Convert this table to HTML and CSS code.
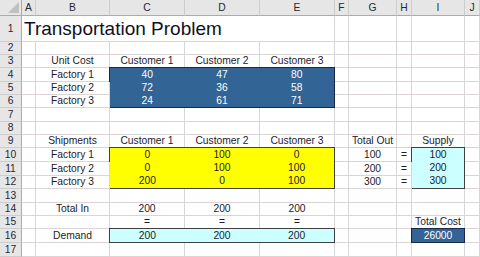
FILE: index.html
```html
<!DOCTYPE html>
<html>
<head>
<meta charset="utf-8">
<title>Transportation Problem</title>
<link rel="stylesheet" href="styles.css">
</head>
<body>
<div class="sheet">
  <!-- column headers -->
  <div class="corner"><div class="tri"></div></div>
  <div class="col">A</div><div class="col">B</div><div class="col">C</div><div class="col">D</div><div class="col">E</div>
  <div class="col">F</div><div class="col">G</div><div class="col">H</div><div class="col">I</div><div class="col">J</div>

  <!-- row 1 -->
  <div class="row">1</div>
  <div class="c title">Transportation Problem</div>
  <div class="c"></div><div class="c"></div><div class="c"></div><div class="c"></div><div class="c"></div><div class="c"></div>

  <!-- row 2 -->
  <div class="row">2</div>
  <div class="c"></div><div class="c"></div><div class="c"></div><div class="c"></div><div class="c"></div>
  <div class="c"></div><div class="c"></div><div class="c"></div><div class="c"></div><div class="c"></div>

  <!-- row 3 -->
  <div class="row">3</div>
  <div class="c"></div><div class="c">Unit Cost</div><div class="c">Customer 1</div><div class="c">Customer 2</div><div class="c">Customer 3</div>
  <div class="c"></div><div class="c"></div><div class="c"></div><div class="c"></div><div class="c"></div>

  <!-- row 4 -->
  <div class="row">4</div>
  <div class="c"></div><div class="c">Factory 1</div>
  <div class="blk blue cost">
    <div class="v">40</div><div class="v">47</div><div class="v">80</div>
    <div class="v">72</div><div class="v">36</div><div class="v">58</div>
    <div class="v">24</div><div class="v">61</div><div class="v">71</div>
  </div>
  <div class="c"></div><div class="c"></div><div class="c"></div><div class="c"></div><div class="c"></div>

  <!-- row 5 -->
  <div class="row">5</div>
  <div class="c"></div><div class="c">Factory 2</div>
  <div class="c"></div><div class="c"></div><div class="c"></div><div class="c"></div><div class="c"></div>

  <!-- row 6 -->
  <div class="row">6</div>
  <div class="c"></div><div class="c">Factory 3</div>
  <div class="c"></div><div class="c"></div><div class="c"></div><div class="c"></div><div class="c"></div>

  <!-- row 7 -->
  <div class="row">7</div>
  <div class="c"></div><div class="c"></div><div class="c"></div><div class="c"></div><div class="c"></div>
  <div class="c"></div><div class="c"></div><div class="c"></div><div class="c"></div><div class="c"></div>

  <!-- row 8 -->
  <div class="row">8</div>
  <div class="c"></div><div class="c"></div><div class="c"></div><div class="c"></div><div class="c"></div>
  <div class="c"></div><div class="c"></div><div class="c"></div><div class="c"></div><div class="c"></div>

  <!-- row 9 -->
  <div class="row">9</div>
  <div class="c"></div><div class="c">Shipments</div><div class="c">Customer 1</div><div class="c">Customer 2</div><div class="c">Customer 3</div>
  <div class="c"></div><div class="c">Total Out</div><div class="c"></div><div class="c">Supply</div><div class="c"></div>

  <!-- row 10 -->
  <div class="row">10</div>
  <div class="c"></div><div class="c">Factory 1</div>
  <div class="blk yellow ship">
    <div class="v">0</div><div class="v">100</div><div class="v">0</div>
    <div class="v">0</div><div class="v">100</div><div class="v">100</div>
    <div class="v">200</div><div class="v">0</div><div class="v">100</div>
  </div>
  <div class="c"></div><div class="c">100</div><div class="c">=</div>
  <div class="blk cyan supply">
    <div class="v">100</div>
    <div class="v">200</div>
    <div class="v">300</div>
  </div>
  <div class="c"></div>

  <!-- row 11 -->
  <div class="row">11</div>
  <div class="c"></div><div class="c">Factory 2</div>
  <div class="c"></div><div class="c">200</div><div class="c">=</div><div class="c"></div>

  <!-- row 12 -->
  <div class="row">12</div>
  <div class="c"></div><div class="c">Factory 3</div>
  <div class="c"></div><div class="c">300</div><div class="c">=</div><div class="c"></div>

  <!-- row 13 -->
  <div class="row">13</div>
  <div class="c"></div><div class="c"></div><div class="c"></div><div class="c"></div><div class="c"></div>
  <div class="c"></div><div class="c"></div><div class="c"></div><div class="c"></div><div class="c"></div>

  <!-- row 14 -->
  <div class="row">14</div>
  <div class="c"></div><div class="c">Total In</div><div class="c">200</div><div class="c">200</div><div class="c">200</div>
  <div class="c"></div><div class="c"></div><div class="c"></div><div class="c"></div><div class="c"></div>

  <!-- row 15 -->
  <div class="row">15</div>
  <div class="c"></div><div class="c"></div><div class="c">=</div><div class="c">=</div><div class="c">=</div>
  <div class="c"></div><div class="c"></div><div class="c"></div><div class="c">Total Cost</div><div class="c"></div>

  <!-- row 16 -->
  <div class="row">16</div>
  <div class="c"></div><div class="c">Demand</div>
  <div class="blk cyan demand">
    <div class="v">200</div><div class="v">200</div><div class="v">200</div>
  </div>
  <div class="c"></div><div class="c"></div><div class="c"></div>
  <div class="blk blue total">
    <div class="v">26000</div>
  </div>
  <div class="c"></div>

  <!-- row 17 -->
  <div class="row">17</div>
  <div class="c"></div><div class="c"></div><div class="c"></div><div class="c"></div><div class="c"></div>
  <div class="c"></div><div class="c"></div><div class="c"></div><div class="c"></div><div class="c"></div>
</div>
</body>
</html>
```

FILE: styles.css
```css
* {
  box-sizing: border-box;
}

html,
body {
  margin: 0;
  padding: 0;
}

body {
  width: 480px;
  height: 257px;
  overflow: hidden;
  background: #ffffff;
  font-family: "Liberation Sans", Arial, sans-serif;
  font-size: 10.3px;
  color: #1c1c2c;
}

.sheet {
  display: grid;
  grid-template-columns: 22px 14px 74px 75px 75px 75px 14px 48px 15px 53px 15px;
  grid-template-rows: 16px 26px 13px 13px 14px 13px 13px 14px 13px 13px 14px 14px 13px 14px 13px 13px 14px 14px;
}

/* headers */
.corner {
  background: #e6e6e6;
  border-right: 1px solid #ababab;
  border-bottom: 1px solid #ababab;
  display: flex;
  justify-content: flex-end;
  align-items: flex-end;
  padding: 0 2px 2px 0;
}

.tri {
  width: 11px;
  height: 11px;
  background: #c0c0c0;
  clip-path: polygon(100% 0, 100% 100%, 0 100%);
}

.col {
  background: #e6e6e6;
  border-right: 1px solid #cdcdcd;
  border-bottom: 1px solid #ababab;
  display: flex;
  align-items: center;
  justify-content: center;
  color: #262636;
  line-height: 14px;
}

.row {
  background: #e6e6e6;
  border-right: 1px solid #ababab;
  border-bottom: 1px solid #cdcdcd;
  display: flex;
  align-items: center;
  justify-content: center;
  color: #262636;
  line-height: 12px;
}

/* ordinary cells */
.c {
  border-right: 1px solid #d6d6d6;
  border-bottom: 1px solid #dcd4d7;
  display: flex;
  align-items: center;
  justify-content: center;
  line-height: 12px;
  white-space: nowrap;
}

.title {
  grid-column: 2 / 6;
  grid-row: 2;
  justify-content: flex-start;
  align-items: flex-end;
  font-size: 19px;
  line-height: 22px;
  padding: 0 0 1px 2px;
  border-right: none;
  color: #10101e;
}

/* coloured blocks */
.blk {
  margin: -1px 0 0 -1px;
  border: 1px solid #404040;
  display: grid;
  grid-auto-rows: 1fr;
  grid-template-columns: repeat(3, 1fr);
}

.v {
  display: flex;
  align-items: center;
  justify-content: center;
  line-height: 12px;
}

.blue {
  background: #326496;
  border-color: #1a2848;
  color: #ffffff;
}

.yellow {
  background: #ffff00;
}

.cyan {
  background: #ccffff;
}

.cost {
  grid-column: 4 / 7;
  grid-row: 5 / 8;
}

.ship {
  grid-column: 4 / 7;
  grid-row: 11 / 14;
}

.supply {
  grid-column: 10 / 11;
  grid-row: 11 / 14;
  grid-template-columns: 1fr;
}

.demand {
  grid-column: 4 / 7;
  grid-row: 17 / 18;
}

.total {
  grid-column: 10 / 11;
  grid-row: 17 / 18;
  grid-template-columns: 1fr;
}
```
